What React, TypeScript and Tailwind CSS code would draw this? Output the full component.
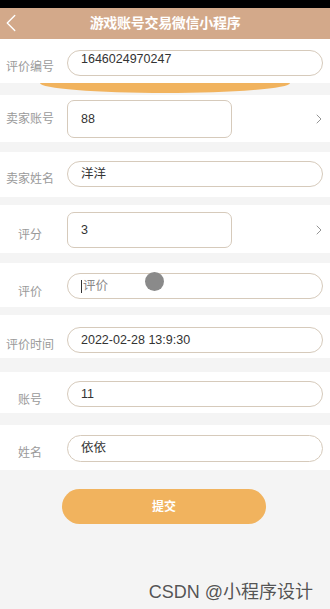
import { ChevronLeft, ChevronRight } from "lucide-react";

type Row = {
  label: string;
  value: string;
  rowCls: string;
  inputCls: string;
  labelCls: string;
  textCls?: string;
  arrow?: boolean;
  placeholder?: boolean;
};

const rows: Row[] = [
  {
    label: "评价编号",
    value: "1646024970247",
    rowCls: "h-[44px] pt-[4px] mb-[12px]",
    inputCls: "h-[26px] w-[256px] rounded-full",
    labelCls: "mt-[8px]",
    textCls: "-mt-[8px]",
  },
  {
    label: "卖家账号",
    value: "88",
    rowCls: "h-[47px] pt-[1px] mb-[10px]",
    inputCls: "h-[38px] w-[165px] rounded-[7px]",
    labelCls: "mt-0",
    arrow: true,
  },
  {
    label: "卖家姓名",
    value: "洋洋",
    rowCls: "h-[45px] pb-[1px] mb-[8px]",
    inputCls: "h-[26px] w-[256px] rounded-full",
    labelCls: "mt-[10px]",
  },
  {
    label: "评分",
    value: "3",
    rowCls: "h-[48px] pt-[2px] mb-[10px]",
    inputCls: "h-[36px] w-[165px] rounded-[7px]",
    labelCls: "mt-[10px]",
    arrow: true,
  },
  {
    label: "评价",
    value: "评价",
    rowCls: "h-[44px] pt-[2px] mb-[8px]",
    inputCls: "h-[26px] w-[256px] rounded-full",
    labelCls: "mt-[12px]",
    placeholder: true,
  },
  {
    label: "评价时间",
    value: "2022-02-28 13:9:30",
    rowCls: "h-[43px] pt-[7px] mb-[14px]",
    inputCls: "h-[26px] w-[256px] rounded-full",
    labelCls: "mt-[10px]",
  },
  {
    label: "账号",
    value: "11",
    rowCls: "h-[41px] pt-[3px] mb-[12px]",
    inputCls: "h-[26px] w-[256px] rounded-full",
    labelCls: "mt-[12px]",
  },
  {
    label: "姓名",
    value: "依依",
    rowCls: "h-[45px] pt-[2px]",
    inputCls: "h-[27px] w-[256px] rounded-full",
    labelCls: "mt-[9px]",
  },
];

const App = () => {
  return (
    <div
      className="relative w-[330px] h-[609px] overflow-hidden bg-[#f4f4f4]"
      style={{ fontFamily: '"Liberation Sans", "Noto Sans CJK SC", sans-serif' }}
    >
      <div className="h-[8px] bg-black" />
      <div className="relative h-[31px] bg-[#d3a98a] flex items-center justify-center">
        <ChevronLeft
          className="absolute -left-[4px] top-0 text-white"
          size={30}
          strokeWidth={1.1}
        />
        <p className="text-[14px] font-semibold text-white tracking-[-0.3px]">
          游戏账号交易微信小程序
        </p>
      </div>

      <div className="flex flex-col">
        {rows.map((row, idx) => (
          <div
            key={idx}
            className={`flex items-center bg-white pr-[7px] ${row.rowCls}`}
          >
            <p
              className={`w-[60px] shrink-0 text-center text-[12px] text-[#9a9a9a] ${row.labelCls}`}
            >
              {row.label}
            </p>
            <div
              className={`ml-[7px] flex items-center border border-[#d6cabb] pl-[13px] bg-white ${row.inputCls}`}
            >
              {row.placeholder ? (
                <span className="flex items-center text-[12.5px] text-[#8a8a8a]">
                  <span className="w-px h-[13px] bg-[#333] mr-[1px]" />
                  {row.value}
                </span>
              ) : (
                <span className={`text-[12.5px] text-[#333] ${row.textCls ?? ""}`}>
                  {row.value}
                </span>
              )}
            </div>
            {row.arrow && (
              <div className="flex-1 flex justify-end">
                <ChevronRight
                  className="text-[#8d8d8d] -mr-[4px]"
                  size={16}
                  strokeWidth={1.4}
                />
              </div>
            )}
          </div>
        ))}
      </div>

      <div className="flex justify-center pr-[2px] mt-[19px]">
        <button className="w-[204px] h-[35px] rounded-full bg-[#f1b35e] text-white text-[12px] font-bold">
          提交
        </button>
      </div>

      <div className="flex justify-end pr-[17px] mt-[55px]">
        <p className="text-[18px] text-[#555] [text-shadow:0_0_2px_#fff]">
          CSDN @小程序设计
        </p>
      </div>

      {/* orange arc peeking under first row */}
      <div className="absolute left-[40px] top-[83px] w-[250px] h-[10px] bg-[#f1b35e] rounded-b-[125px_10px]" />
      {/* touch indicator */}
      <div className="absolute left-[145px] top-[272px] w-[19px] h-[19px] rounded-full bg-[#8a8a8a]" />
    </div>
  );
};

export default App;
